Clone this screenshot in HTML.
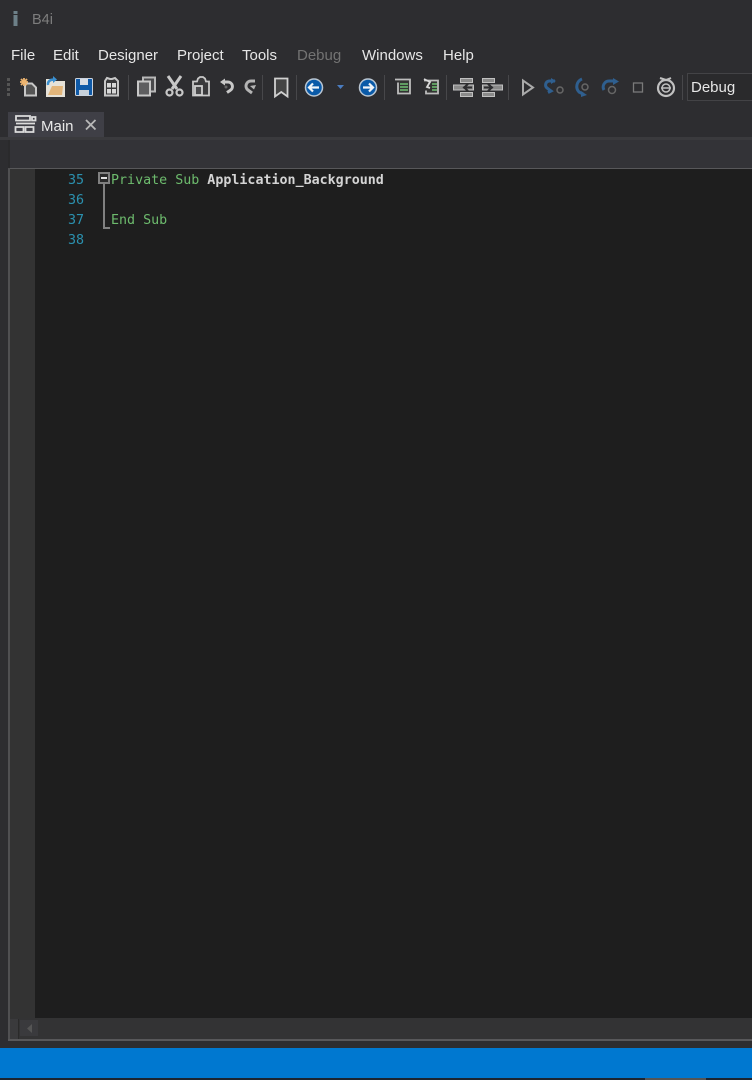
<!DOCTYPE html>
<html><head><meta charset="utf-8"><title>B4i</title>
<style>
html,body{margin:0;padding:0;background:#2d2d30;}
#p{position:relative;width:752px;height:1080px;overflow:hidden;background:#2d2d30;font-family:"Liberation Sans",sans-serif;}
.a{position:absolute;}
.m{position:absolute;top:47px;font-size:15px;line-height:18px;color:#e6e6e6;white-space:nowrap;}
.c{position:absolute;font-family:"DejaVu Sans Mono","Liberation Mono",monospace;font-size:13.33px;line-height:20px;white-space:pre;}
.n{color:#2b91af;left:68px;}
.g{color:#6dbb6d;}
.s{position:absolute;top:75px;width:1px;height:25px;background:#47474a;}
svg{position:absolute;left:0;top:0;}
</style></head><body><div id="p">
<div class="a" style="left:32px;top:11px;font-size:14.5px;line-height:18px;color:#7d7d7d;">B4i</div>
<div class="m" style="left:11px">File</div>
<div class="m" style="left:53px">Edit</div>
<div class="m" style="left:98px">Designer</div>
<div class="m" style="left:177px">Project</div>
<div class="m" style="left:242px">Tools</div>
<div class="m" style="left:297px;color:#737373">Debug</div>
<div class="m" style="left:362px">Windows</div>
<div class="m" style="left:443px">Help</div>

<div class="s" style="left:128px"></div><div class="s" style="left:262px"></div><div class="s" style="left:296px"></div><div class="s" style="left:384px"></div><div class="s" style="left:446px"></div><div class="s" style="left:508px"></div><div class="s" style="left:682px"></div>

<svg width="752" height="140" viewBox="0 0 752 140" fill="none">
<!-- title i -->
<rect x="13.500" y="11" width="4" height="3" fill="#6d8088"/><rect x="13.500" y="15" width="4" height="11" fill="#6d8088"/>
<!-- grip -->
<g fill="#555"><rect x="7" y="78" width="3" height="3"/><rect x="7" y="83" width="3" height="3"/><rect x="7" y="88" width="3" height="3"/><rect x="7" y="93" width="3" height="3"/></g>
<!-- new -->
<path d="M25 83.500h7l4 4v8H25z" fill="#555" stroke="#c8c8c8" stroke-width="2"/>
<path d="M24 78v8M20 82h8M21 79l6 6M27 79l-6 6" stroke="#eeb570" stroke-width="1.800"/>
<!-- open -->
<path d="M46 83v-4h6l2 2h11v16H46z" fill="#e6e2d8"/><path d="M48 95l4-9h11l-1 9z" fill="#e2b57a"/>
<path d="M48 85a4.500 4.500 0 0 1 6-5" stroke="#3a8fd0" stroke-width="2.500"/><path d="M53 76l4 3.500-4 3.500z" fill="#3a8fd0"/>
<!-- save -->
<rect x="75.500" y="78.500" width="17" height="17" rx="1" fill="#0f5aa8" stroke="#c9d3df"/><rect x="80" y="79" width="8" height="6" fill="#d8dde4"/><rect x="79" y="90" width="10" height="5" fill="#c7d0da"/>
<!-- save all -->
<path d="M105 95.500V81l2-3 3 1h2l3-1 3 3v14.500z" fill="#3a3a3c" stroke="#c8c8c8" stroke-width="2"/><g fill="#d8d8d8"><rect x="107" y="83" width="4" height="4.500"/><rect x="112" y="83" width="4" height="4.500"/><rect x="107" y="89" width="4" height="4.500"/><rect x="112" y="89" width="4" height="4.500"/></g>
<!-- copy -->
<path d="M143 81v-3.500h12v14h-4" stroke="#b8b8b8" stroke-width="2" fill="#4a4a4c"/><rect x="138" y="81.500" width="12" height="14" fill="#5e5e60" stroke="#c8c8c8" stroke-width="2"/>
<!-- cut -->
<path d="M168 76l9 13M181 76l-9 13" stroke="#c8c8c8" stroke-width="3"/><circle cx="169.500" cy="92.500" r="3" stroke="#c8c8c8" stroke-width="2.200"/><circle cx="179.500" cy="92.500" r="3" stroke="#c8c8c8" stroke-width="2.200"/>
<!-- paste -->
<path d="M193 95.500V81.500h4l1-3 2-1.500h3l2 1.500 1 3h3v14z" fill="#3a3a3c" stroke="#c8c8c8" stroke-width="1.800"/><rect x="195" y="86" width="7" height="9" fill="#4a4a4c" stroke="#d0d0d0" stroke-width="1.800"/>
<!-- undo/redo -->
<path d="M222 82h6a4.500 4.500 0 0 1 2 8.500l-3 2" stroke="#c8c8c8" stroke-width="3"/><path d="M220 82l5-3.500v7z" fill="#c8c8c8"/><circle cx="226" cy="87" r="1.500" fill="#666"/>
<path d="M255 81h-4a5 5 0 0 0-3 9l4 3" stroke="#b4b4b4" stroke-width="3"/><path d="M256 85l-6 1 4 3.500z" fill="#b4b4b4"/>
<!-- bookmark -->
<path d="M275 78.500h12.500v18l-6.250-4.500-6.250 4.500z" fill="#444" stroke="#d0d0d0" stroke-width="1.800"/>
<!-- nav -->
<circle cx="314" cy="87.500" r="8.500" fill="#0a5aa8" stroke="#bac6d2" stroke-width="1.500"/><path d="M319 87.500h-9M313 83.500l-4 4 4 4" stroke="#f0f4f8" stroke-width="2.200"/>
<path d="M337 85h7l-3.500 4z" fill="#4a7cc0"/>
<circle cx="368" cy="87.500" r="8.500" fill="#0a5aa8" stroke="#bac6d2" stroke-width="1.500"/><path d="M363 87.500h9M369 83.500l4 4-4 4" stroke="#f0f4f8" stroke-width="2.200"/>
<!-- comment -->
<path d="M395 79.500h15v14h-12v-11" stroke="#bdbdbd" stroke-width="1.800" fill="#333"/><path d="M400 84h8M400 87h8M400 90h8" stroke="#6fbf73" stroke-width="1.400"/>
<path d="M424 80.500h14v13h-12v-3" stroke="#bdbdbd" stroke-width="1.800" fill="#333"/><path d="M432 84h5M432 87h5M432 90h5" stroke="#6fbf73" stroke-width="1.400"/><path d="M424 79l6 3-3 5 3 1" stroke="#d8d8d8" stroke-width="1.800"/>
<!-- indent -->
<g fill="#8a8a8a" stroke="#c0c0c0"><rect x="460.500" y="78.500" width="12" height="4"/><rect x="453.500" y="85" width="20" height="5"/><rect x="460.500" y="92.500" width="12" height="4"/>
<rect x="482.500" y="78.500" width="12" height="4"/><rect x="482.500" y="85" width="20" height="5"/><rect x="482.500" y="92.500" width="12" height="4"/></g>
<path d="M472 87.500h-8M468 84l-4 3.500 4 3.500" stroke="#2d2d30" stroke-width="2"/>
<path d="M484 87.500h8M488 84l4 3.500-4 3.500" stroke="#2d2d30" stroke-width="2"/>
<!-- debug -->
<path d="M523 80.500v14l10-7z" stroke="#aaa" stroke-width="2"/>
<path d="M555 81h-6a4 4 0 0 0-2 7l4 3-3 1.500" stroke="#2f5f8f" stroke-width="3"/><path d="M551 78l5 3-5 3z" fill="#2f5f8f"/><circle cx="560" cy="90" r="3" stroke="#666" stroke-width="1.500"/>
<path d="M582 79a8 8 0 0 0-3 13l4 2" stroke="#2f5f8f" stroke-width="3"/><path d="M581 91l6 4-6 2z" fill="#2f5f8f"/><circle cx="585" cy="87" r="3" stroke="#666" stroke-width="1.500"/>
<path d="M615 81h-6a6 6 0 0 0-5 9" stroke="#2f5f8f" stroke-width="3"/><path d="M613 78l6 3.500-6 3.500z" fill="#2f5f8f"/><circle cx="612" cy="90" r="3.500" stroke="#666" stroke-width="1.500"/>
<rect x="633.500" y="83" width="9" height="9" stroke="#7a7a7a" stroke-width="1.300"/>
<circle cx="666" cy="88" r="8" stroke="#c0c0c0" stroke-width="2.200"/><path d="M661 88h10M666 83v0" stroke="#c0c0c0" stroke-width="1.500"/><circle cx="666" cy="88" r="4" stroke="#c0c0c0" stroke-width="1.500"/><path d="M660 78l6 2 5-2" stroke="#c0c0c0" stroke-width="2"/>
</svg>

<!-- combo -->
<div class="a" style="left:687px;top:73px;width:80px;height:28px;background:#2a2a2c;border:1px solid #434346;box-sizing:border-box;"></div>
<div class="a" style="left:691px;top:79px;font-size:15px;line-height:18px;color:#e6e6e6;">Debug</div>

<!-- tab -->
<div class="a" style="left:8px;top:112px;width:96px;height:25px;background:#3f3f46;"></div>
<svg width="40" height="30" viewBox="0 0 40 30" style="left:12px;top:112px" fill="none">
<path d="M4 4h14v4.500H4zM20 5h3.500v3.500H20zM4 11.500h19M3.500 15h8v5h-8zM13.500 15h8v5h-8z" stroke="#dcdcdc" stroke-width="1.800"/>
</svg>
<div class="a" style="left:41px;top:118px;font-size:15px;line-height:18px;color:#e8e8e8;">Main</div>
<svg width="16" height="16" viewBox="0 0 16 16" style="left:83px;top:117px" fill="none"><path d="M3 3l9.500 9.500M12.500 3L3 12.500" stroke="#b8b8b8" stroke-width="1.800"/></svg>

<!-- editor frame -->
<div class="a" style="left:0;top:137px;width:752px;height:3px;background:#3a3a3d;"></div>
<div class="a" style="left:8px;top:140px;width:2px;height:28px;background:#2a2a2c;"></div>
<div class="a" style="left:10px;top:140px;width:742px;height:28px;background:#333337;"></div>
<div class="a" style="left:8px;top:168px;width:744px;height:1px;background:#58585a;"></div>
<div class="a" style="left:8px;top:168px;width:2px;height:873px;background:#505052;"></div>
<div class="a" style="left:10px;top:169px;width:25px;height:849px;background:#333333;"></div>
<div class="a" style="left:35px;top:169px;width:717px;height:849px;background:#1e1e1e;"></div>

<!-- code -->
<div class="c n" style="top:171px">35</div>
<div class="c n" style="top:191px">36</div>
<div class="c n" style="top:211px">37</div>
<div class="c n" style="top:231px">38</div>
<div class="c g" style="left:111px;top:171px">Private Sub <b style="color:#d4d4d4">Application_Background</b></div>
<div class="c g" style="left:111px;top:211px">End Sub</div>
<!-- fold -->
<div class="a" style="left:98px;top:172px;width:12px;height:12px;box-sizing:border-box;border:2px solid #808080;background:#2a2a2a;"></div>
<div class="a" style="left:101px;top:177px;width:6px;height:2px;background:#e0e0e0;"></div>
<div class="a" style="left:103px;top:184px;width:2px;height:45px;background:#808080;"></div>
<div class="a" style="left:103px;top:227px;width:7px;height:2px;background:#808080;"></div>

<!-- scrollbar -->
<div class="a" style="left:10px;top:1018px;width:742px;height:21px;background:#333334;"></div>
<div class="a" style="left:10px;top:1019px;width:8px;height:20px;background:#3a3a3c;border-right:1px solid #2a2a2a;"></div>
<div class="a" style="left:20px;top:1020px;width:18px;height:16px;background:#3a3a3d;"></div>
<svg width="12" height="12" viewBox="0 0 12 12" style="left:24px;top:1023px"><path d="M8 1v9L3 5.500z" fill="#555"/></svg>
<div class="a" style="left:8px;top:1039px;width:744px;height:2px;background:#58585a;"></div>

<!-- status -->
<div class="a" style="left:0;top:1048px;width:752px;height:30px;background:#0078d0;"></div>
<div class="a" style="left:0;top:1078px;width:752px;height:2px;background:#1c2530;"></div>
<div class="a" style="left:645px;top:1078px;width:61px;height:2px;background:#555;"></div>
</div></body></html>
